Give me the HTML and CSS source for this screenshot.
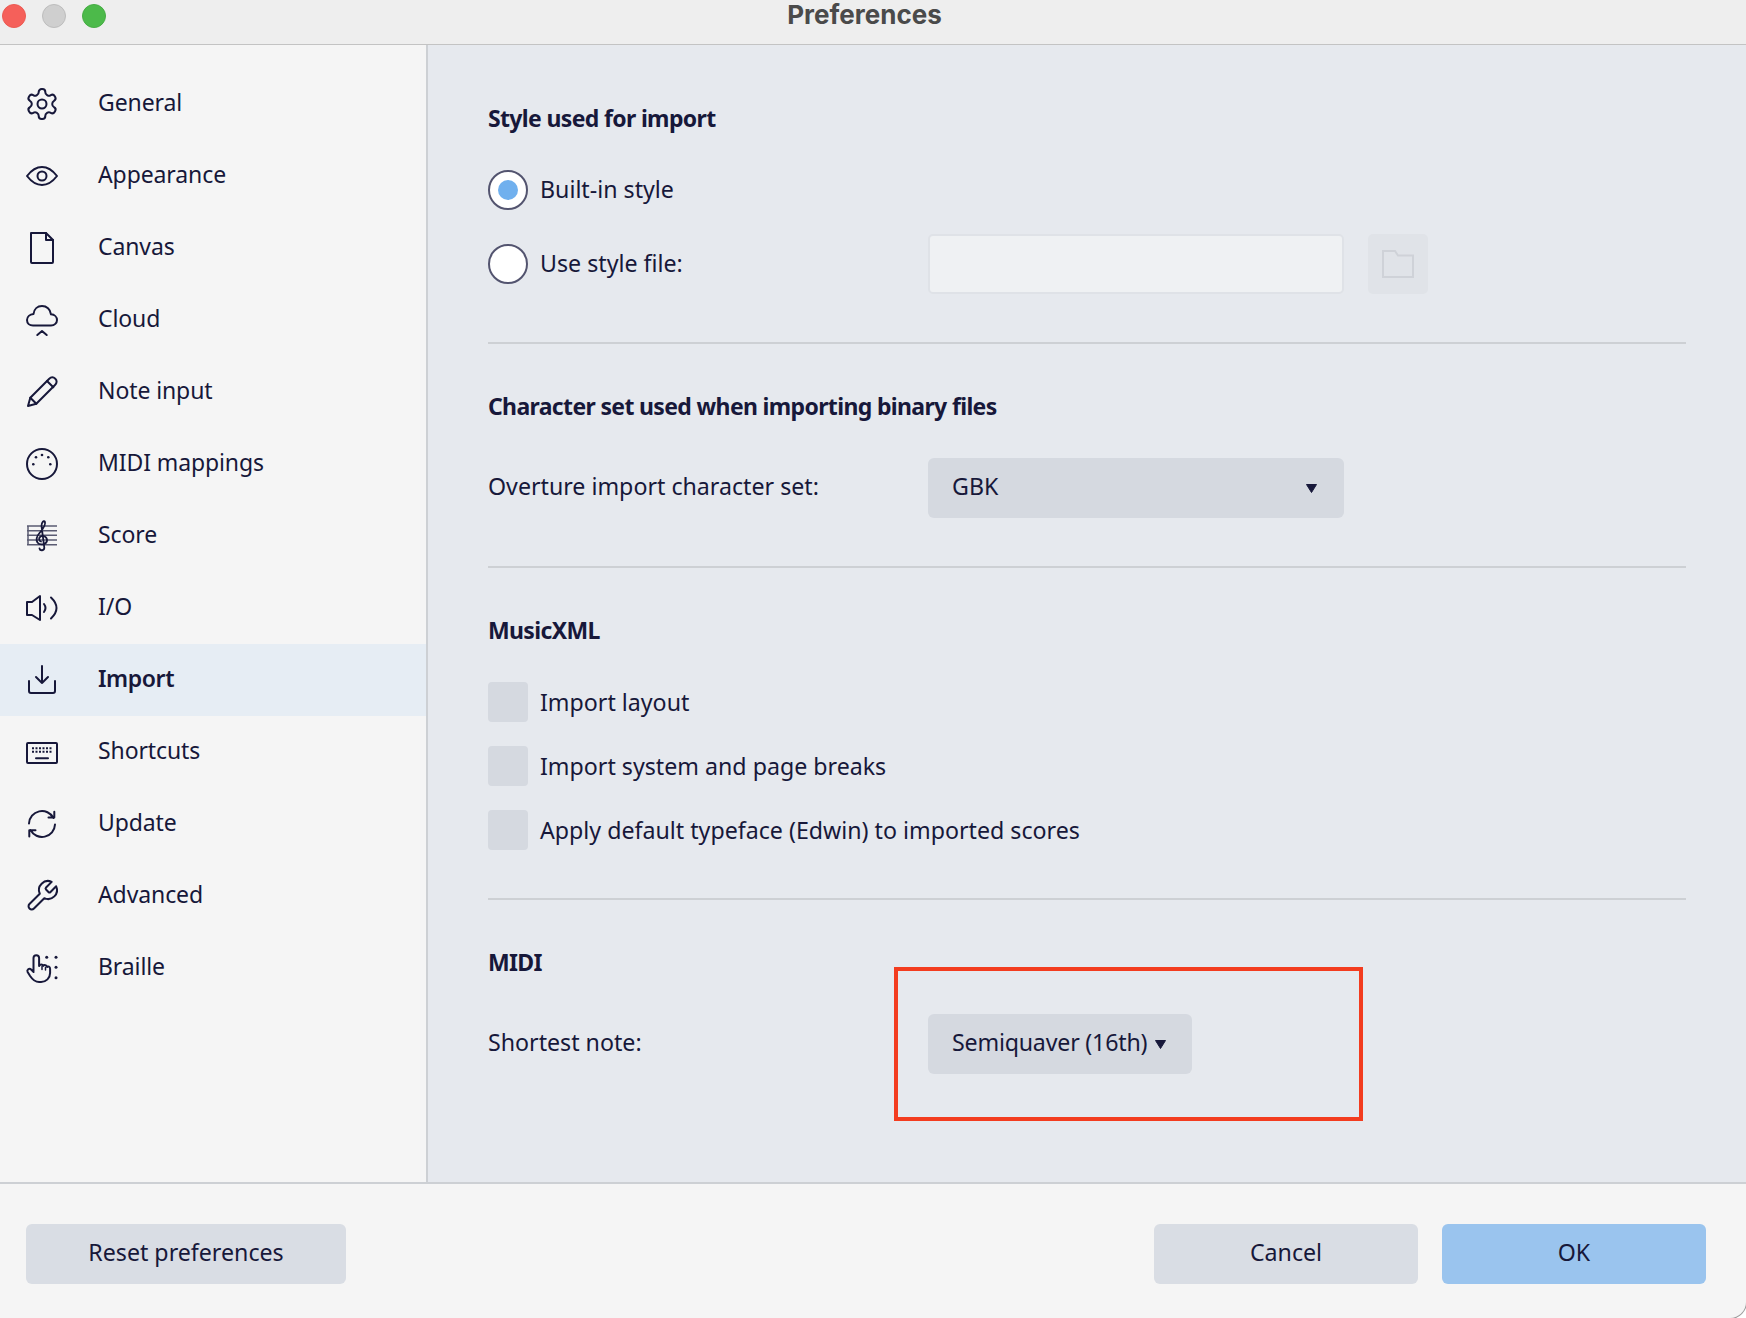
FILE: index.html
```html
<!DOCTYPE html>
<html lang="en">
<head>
<meta charset="utf-8">
<title>Preferences</title>
<link rel="stylesheet" href="styles.css">
</head>
<body>
<div class="window">
  <header class="titlebar">
    <div class="lights">
      <span class="light light-red"></span>
      <span class="light light-grey"></span>
      <span class="light light-green"></span>
    </div>
    <div class="title">Preferences</div>
  </header>
  <div class="main">
    <nav class="sidebar">
      <a class="nav-item">
        <svg class="icon" viewBox="1.3 1.3 21.4 21.4"><g stroke-width="1.35"><path d="M12.22 2h-.44a2 2 0 0 0-2 2v.18a2 2 0 0 1-1 1.73l-.43.25a2 2 0 0 1-2 0l-.15-.08a2 2 0 0 0-2.73.73l-.22.38a2 2 0 0 0 .73 2.73l.15.1a2 2 0 0 1 1 1.72v.51a2 2 0 0 1-1 1.74l-.15.09a2 2 0 0 0-.73 2.73l.22.38a2 2 0 0 0 2.73.73l.15-.08a2 2 0 0 1 2 0l.43.25a2 2 0 0 1 1 1.73V20a2 2 0 0 0 2 2h.44a2 2 0 0 0 2-2v-.18a2 2 0 0 1 1-1.73l.43-.25a2 2 0 0 1 2 0l.15.08a2 2 0 0 0 2.73-.73l.22-.39a2 2 0 0 0-.73-2.73l-.15-.08a2 2 0 0 1-1-1.74v-.5a2 2 0 0 1 1-1.74l.15-.09a2 2 0 0 0 .73-2.73l-.22-.38a2 2 0 0 0-2.73-.73l-.15.08a2 2 0 0 1-2 0l-.43-.25a2 2 0 0 1-1-1.73V4a2 2 0 0 0-2-2z"/><circle cx="12" cy="12" r="3"/></g></svg>
        <span class="nav-label">General</span>
      </a>
      <a class="nav-item">
        <svg class="icon" viewBox="0 0 32 32"><path d="M1 16C6 9.500 11 7 16 7s10 2.500 15 9c-5 6.500-10 9-15 9S6 22.500 1 16z"/><circle cx="16" cy="16" r="4.500"/></svg>
        <span class="nav-label">Appearance</span>
      </a>
      <a class="nav-item">
        <svg class="icon" viewBox="0 0 32 32"><path d="M5 1h15l7 7v22a1 1 0 0 1-1 1H6a1 1 0 0 1-1-1z"/><path d="M20 1v7h7"/></svg>
        <span class="nav-label">Canvas</span>
      </a>
      <a class="nav-item">
        <svg class="icon" viewBox="0 0 32 32"><path d="M7 21.500h18c3.500 0 6-2.500 6-5.500s-2.500-5.500-6-5.700C24.500 5 20.500 2 16 2S8 5 7.500 10C3.800 10.300 1 12.800 1 16s2.500 5.500 6 5.500z"/><path d="M11.300 31l4.700-4 4.700 4"/></svg>
        <span class="nav-label">Cloud</span>
      </a>
      <a class="nav-item">
        <svg class="icon" viewBox="0 0 32 32"><path d="M2 30l2.300-8.200L23 3c2-2 4.500-2 6.300-.3s1.800 4.300-.3 6.300L10.300 27.800z"/><path d="M4.300 21.800l6 6M21 5l6.300 6.300"/></svg>
        <span class="nav-label">Note input</span>
      </a>
      <a class="nav-item">
        <svg class="icon" viewBox="0 0 32 32"><circle cx="16" cy="16" r="15"/><g class="dots"><circle cx="7.300" cy="16.300" r="1.300"/><circle cx="10" cy="9.300" r="1.300"/><circle cx="16" cy="7" r="1.300"/><circle cx="22.300" cy="9.300" r="1.300"/><circle cx="24.300" cy="16.300" r="1.300"/></g></svg>
        <span class="nav-label">MIDI mappings</span>
      </a>
      <a class="nav-item">
        <svg class="icon" viewBox="0 0 32 32"><path class="staff" d="M1 6h30M1 10.700h30M1 15.300h30M1 20h30M1 24.700h30"/><path class="staff" d="M2 6v18.700"/><path stroke-width="1.800" d="M13.500 28.500c.5 2.500 5 2.500 4.800-1L15.500 6c-.2-3.500 2.500-6 3.300-4.500 1.200 2.500-1.800 7.500-5.300 11.500-3 3.500-3.500 7-2 9.500 2 3 8.500 2.500 9.500-1.500.5-4-4-6.500-7-4-1.500 1.500-1 4 1 4.500"/></svg>
        <span class="nav-label">Score</span>
      </a>
      <a class="nav-item">
        <svg class="icon" viewBox="0 0 32 32"><path d="M1 10h5l8-6v24l-8-5H1z"/><path d="M18 12q3 4 0 8M25 5.500q11 10.500 0 21"/></svg>
        <span class="nav-label">I/O</span>
      </a>
      <a class="nav-item nav-item-active">
        <svg class="icon" viewBox="0 0 32 32"><path d="M16 2v17M10 13l6 6 6-6"/><path d="M3 17v10a2 2 0 0 0 2 2h22a2 2 0 0 0 2-2V17"/></svg>
        <span class="nav-label">Import</span>
      </a>
      <a class="nav-item">
        <svg class="icon" viewBox="0 0 32 32"><rect x="1" y="7" width="30" height="20" rx="1"/><path class="keys" d="M6 12.300h20M6 15.800h20"/><path d="M10 22.300h12"/></svg>
        <span class="nav-label">Shortcuts</span>
      </a>
      <a class="nav-item">
        <svg class="icon" viewBox="0 0 32 32"><path d="M3 15.500A13 13 0 0 1 27.500 10M28.300 3.700v5.800h-5.800M29 16.500A13 13 0 0 1 4.500 22M3.300 28.500v-6.200h6.200"/></svg>
        <span class="nav-label">Update</span>
      </a>
      <a class="nav-item">
        <svg class="icon" viewBox="1.300 1.300 21.400 21.400"><path stroke-width="1.350" d="M14.700 6.300a1 1 0 0 0 0 1.400l1.600 1.600a1 1 0 0 0 1.400 0l3.770-3.770a6 6 0 0 1-7.940 7.940l-6.910 6.910a2.120 2.120 0 0 1-3-3l6.910-6.910a6 6 0 0 1 7.940-7.940l-3.760 3.760z"/></svg>
        <span class="nav-label">Advanced</span>
      </a>
      <a class="nav-item">
        <svg class="icon" viewBox="0 0 32 32"><path d="M7.500 19V6a2.800 2.800 0 0 1 5.600 0v8c1-2 3.500-2 4 0 1-1.500 3.500-1 4 1 1-1 3-.5 3 2v4a9 9 0 0 1-9 9h-2c-4 0-7-3-9-6l-2.500-4c-1-2 1.500-4.500 3.500-2.500l2.500 2.500"/><path stroke-width="1.500" d="M16 14.500v3M19.500 15.500v2.500"/><g class="dots"><circle cx="20.700" cy="5.300" r="1.500"/><circle cx="30" cy="5.300" r="1.500"/><circle cx="30" cy="15.300" r="1.500"/><circle cx="30" cy="25.700" r="1.500"/></g></svg>
        <span class="nav-label">Braille</span>
      </a>
    </nav>
    <section class="content">
      <div class="group">
        <h2 class="group-title">Style used for import</h2>
        <div class="rows">
          <div class="row row-radio">
            <span class="radio radio-on"></span>
            <span class="text">Built-in style</span>
          </div>
          <div class="row row-file">
            <div class="radio-col row-radio">
              <span class="radio"></span>
              <span class="text">Use style file:</span>
            </div>
            <div class="file-input"></div>
            <div class="file-btn">
              <svg class="folder" viewBox="0 0 32 28"><path d="M1 1h12l3 4.500h15V27H1z"/></svg>
            </div>
          </div>
        </div>
      </div>
      <div class="group">
        <h2 class="group-title">Character set used when importing binary files</h2>
        <div class="row row-field">
          <span class="field-label text">Overture import character set:</span>
          <div class="select select-wide">
            <span class="text">GBK</span>
            <svg class="caret" viewBox="0 0 11 9"><path d="M.5.5h10L5.500 8.500z"/></svg>
          </div>
        </div>
      </div>
      <div class="group">
        <h2 class="group-title">MusicXML</h2>
        <div class="rows">
          <div class="row"><span class="check"></span><span class="text">Import layout</span></div>
          <div class="row"><span class="check"></span><span class="text">Import system and page breaks</span></div>
          <div class="row"><span class="check"></span><span class="text">Apply default typeface (Edwin) to imported scores</span></div>
        </div>
      </div>
      <div class="group group-last">
        <h2 class="group-title">MIDI</h2>
        <div class="row row-field">
          <span class="field-label text">Shortest note:</span>
          <div class="select select-note">
            <span class="text text-note">Semiquaver (16th)</span>
            <svg class="caret" viewBox="0 0 11 9"><path d="M.5.5h10L5.500 8.500z"/></svg>
          </div>
        </div>
        <div class="callout"></div>
      </div>
    </section>
  </div>
  <footer class="footer">
    <button class="btn btn-reset">Reset preferences</button>
    <div class="footer-right">
      <button class="btn btn-std">Cancel</button>
      <button class="btn btn-std btn-ok">OK</button>
    </div>
  </footer>
</div>
</body>
</html>
```
FILE: styles.css
```css
* { box-sizing: border-box; }
html, body { margin: 0; height: 100%; }
body {
  background: #fff;
  color: #17183a;
  font-family: "Noto Sans", "Open Sans", sans-serif;
  font-size: 23.200px;
  overflow: hidden;
}
.window {
  width: 1746px;
  height: 1318px;
  display: flex;
  flex-direction: column;
  background: #f5f5f5;
  border-bottom-right-radius: 16px;
  box-shadow: 0 0 0 1px #9c9c9c;
}
.titlebar {
  height: 45px;
  flex: none;
  display: grid;
  grid-template-columns: 1fr auto 1fr;
  align-items: start;
  padding: 0 17px 0 0;
  background: #eeeeee;
  border-bottom: 1px solid #c3c3c3;
}
.lights {
  display: flex;
  gap: 16px;
  padding: 4px 0 0 2px;
}
.light {
  width: 24px;
  height: 24px;
  border-radius: 50%;
}
.light-red { background: #f5605a; border: 1px solid #ec5a52; }
.light-grey { background: #cfcfcf; border: 1px solid #bdbdbd; }
.light-green { background: #4cba4a; border: 1px solid #46ad44; }
.title {
  font-family: Inter, sans-serif;
  font-weight: 700;
  font-size: 26px;
  line-height: 30px;
  color: #4a4a4a;
}
.main {
  flex: none;
  height: 1139px;
  display: flex;
  border-bottom: 2px solid #cdd0d4;
}
.sidebar {
  width: 428px;
  flex: none;
  padding-top: 23px;
  background: #f5f5f5;
  border-right: 2px solid #cdd0d4;
}
.nav-item {
  height: 72px;
  display: flex;
  align-items: center;
  gap: 40px;
  padding-left: 26px;
}
.nav-item-active { background: #e6edf4; }
.nav-item-active .nav-label { font-weight: 600; letter-spacing: -.4px; }
.nav-label { padding-bottom: 5px; font-size: 23px; letter-spacing: -.1px; }
.icon {
  width: 32px;
  height: 32px;
  flex: none;
  fill: none;
  stroke: #17183a;
  stroke-width: 2;
  stroke-linecap: round;
  stroke-linejoin: round;
  overflow: visible;
}
.dots { fill: #17183a; stroke: none; }
.staff { stroke: #5a5b72; stroke-width: 1.500; stroke-linecap: butt; }
.keys { stroke-width: 2; stroke-dasharray: 2 1.500; stroke-linecap: butt; }
.content {
  flex: 1;
  min-width: 0;
  padding: 11px 60px 0 60px;
  background: #e6e9ee;
}
.group {
  padding: 46px 0 48px;
  border-bottom: 2px solid #cdd0d4;
  position: relative;
}
.group-last { border-bottom: 0; }
.group-title {
  margin: 0 0 36px;
  font-size: 23px;
  font-weight: 700;
  letter-spacing: -.65px;
  line-height: 32px;
}
.rows {
  display: flex;
  flex-direction: column;
  gap: 24px;
}
.row {
  display: flex;
  align-items: center;
  gap: 12px;
  min-height: 40px;
}
.row-field { gap: 0; min-height: 60px; }
.row-field .text { padding-bottom: 4px; }
.row-radio .text { padding-bottom: 2px; }
.row-file { gap: 0; }
.radio-col {
  display: flex;
  align-items: center;
  gap: 12px;
  width: 440px;
}
.text { line-height: 32px; }
.text-note { letter-spacing: -.2px; }
.radio {
  width: 40px;
  height: 40px;
  flex: none;
  display: flex;
  align-items: center;
  justify-content: center;
  background: #fff;
  border: 2px solid #53546f;
  border-radius: 50%;
}
.radio-on::after {
  content: "";
  width: 20px;
  height: 20px;
  border-radius: 50%;
  background: #70b0ee;
}
.file-input {
  width: 416px;
  height: 60px;
  flex: none;
  background: #eff1f3;
  border: 2px solid #dfe2e7;
  border-radius: 5px;
}
.file-btn {
  width: 60px;
  height: 60px;
  flex: none;
  margin-left: 24px;
  display: flex;
  align-items: center;
  justify-content: center;
  background: #e0e3e8;
  border-radius: 5px;
}
.folder {
  width: 32px;
  height: 28px;
  fill: none;
  stroke: #cfd2d8;
  stroke-width: 2;
}
.field-label { width: 440px; flex: none; }
.select {
  height: 60px;
  flex: none;
  display: flex;
  align-items: center;
  justify-content: space-between;
  padding: 0 27px 0 24px;
  background: #d5d9e0;
  border-radius: 6px;
}
.select-wide { width: 416px; }
.select-note { width: 264px; padding-right: 26px; }
.caret {
  width: 11px;
  height: 9px;
  flex: none;
  fill: #17183a;
  stroke: #17183a;
  stroke-width: 1;
  stroke-linejoin: round;
}
.check {
  width: 40px;
  height: 40px;
  flex: none;
  background: #d5d9e0;
  border-radius: 4px;
}
.callout {
  position: absolute;
  left: 406px;
  top: 67px;
  width: 469px;
  height: 154px;
  border: 4px solid #f33c1f;
}
.footer {
  flex: 1;
  display: flex;
  justify-content: space-between;
  padding: 40px 40px 0 26px;
  border-bottom-right-radius: 16px;
}
.footer-right {
  display: flex;
  gap: 24px;
}
.btn {
  height: 60px;
  padding: 0 0 4px;
  border: 0;
  border-radius: 6px;
  background: #d9dde4;
  color: #17183a;
  font: inherit;
}
.btn-reset { width: 320px; }
.btn-std { width: 264px; }
.btn-ok { background: #9ac4ee; }
```
